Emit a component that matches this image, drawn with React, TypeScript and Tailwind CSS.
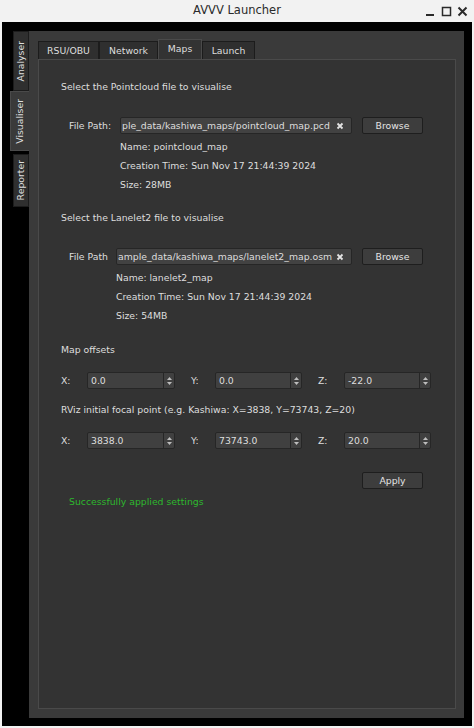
import React from "react";

function TitleBar() {
  return (
    <div className="relative h-[22px] flex items-center justify-center bg-[#f2f2f2] text-[#2a2a2a] text-[11.5px]">
      <span>AVVV Launcher</span>
      <div className="absolute right-[6px] top-0 h-[22px] flex items-center gap-[5px]">
        <svg width="11" height="11" viewBox="0 0 11 11">
          <rect x="1" y="8" width="8" height="2" fill="#2a2a2a" />
        </svg>
        <svg width="11" height="11" viewBox="0 0 11 11">
          <rect x="1.5" y="1.5" width="8" height="8" fill="none" stroke="#2a2a2a" strokeWidth="1.5" />
        </svg>
        <svg width="11" height="11" viewBox="0 0 11 11">
          <path d="M1.5 1.5 L9.5 9.5 M9.5 1.5 L1.5 9.5" stroke="#2a2a2a" strokeWidth="2" />
        </svg>
      </div>
    </div>
  );
}

function SideTabs() {
  return (
    <div className="w-[27px] flex flex-col items-end">
      <div className="w-[16px] h-[60px] bg-[#2f2f2f] border border-[#1c1c1c] flex items-center justify-center">
        <span className="[writing-mode:vertical-rl] rotate-180 whitespace-nowrap">Analyser</span>
      </div>
      <div className="w-[19px] h-[60px] bg-[#3a3a3a] border-t border-l border-b border-[#4a4a4a] flex items-center justify-center">
        <span className="[writing-mode:vertical-rl] rotate-180 whitespace-nowrap">Visualiser</span>
      </div>
      <div className="mt-[3px] w-[16px] h-[53px] bg-[#2f2f2f] border border-[#1c1c1c] flex items-center justify-center">
        <span className="[writing-mode:vertical-rl] rotate-180 whitespace-nowrap">Reporter</span>
      </div>
    </div>
  );
}

function TopTabs() {
  return (
    <div className="h-[20px] flex items-end">
      <div className="w-[61px] h-[18px] bg-[#2f2f2f] border border-b-0 border-[#1c1c1c] flex items-center justify-center">RSU/OBU</div>
      <div className="w-[59px] h-[18px] bg-[#2f2f2f] border border-b-0 border-[#1c1c1c] flex items-center justify-center">Network</div>
      <div className="w-[44px] h-[20px] bg-[#333333] border border-b-0 border-[#4a4a4a] flex items-center justify-center pb-[2px]">Maps</div>
      <div className="w-[53px] h-[18px] bg-[#2f2f2f] border border-b-0 border-[#1c1c1c] flex items-center justify-center">Launch</div>
    </div>
  );
}

function ClearIcon() {
  return (
    <svg width="8" height="8" viewBox="0 0 8 8">
      <path d="M1.5 1.5 L6.5 6.5 M6.5 1.5 L1.5 6.5" stroke="#e4e4e4" strokeWidth="1.8" />
    </svg>
  );
}

function Button({ label, className }: { label: string; className?: string }) {
  return (
    <div
      className={
        "w-[61px] h-[17px] bg-[#3d3d3d] border border-[#1e1e1e] rounded-[2px] flex items-center justify-center text-[#e4e4e4] " +
        (className ?? "")
      }
    >
      {label}
    </div>
  );
}

function FileRow({ label, labelW, fieldW, text }: { label: string; labelW: string; fieldW: string; text: string }) {
  return (
    <div className="flex items-center h-[17px] pl-[30px]">
      <div className={labelW + " whitespace-nowrap"}>{label}</div>
      <div className={fieldW + " h-[17px] bg-[#424242] border border-[#262626] rounded-[2px] flex items-center pl-[1px] pr-[7px] overflow-hidden"}>
        <span className="flex-1 whitespace-nowrap overflow-hidden">{text}</span>
        <ClearIcon />
      </div>
      <Button label="Browse" className="ml-[10px]" />
    </div>
  );
}

function Info({ pl, children }: { pl: string; children: React.ReactNode }) {
  return <div className={pl + " h-[19px] flex items-center whitespace-nowrap"}>{children}</div>;
}

function SpinBox({ value, w }: { value: string; w: string }) {
  return (
    <div className={w + " h-[17px] bg-[#404040] border border-[#262626] rounded-[2px] flex"}>
      <div className="flex-1 flex items-center pl-[3px]">{value}</div>
      <div className="w-[11px] border-l border-[#262626] flex flex-col items-center justify-center gap-[2px]">
        <svg width="5" height="3" viewBox="0 0 5 3">
          <path d="M0 3 L2.5 0 L5 3 Z" fill="#bdbdbd" />
        </svg>
        <svg width="5" height="3" viewBox="0 0 5 3">
          <path d="M0 0 L2.5 3 L5 0 Z" fill="#bdbdbd" />
        </svg>
      </div>
    </div>
  );
}

function SpinRow({ x, y, z }: { x: string; y: string; z: string }) {
  return (
    <div className="flex items-center h-[17px] pl-[22px]">
      <div className="w-[26px]">X:</div>
      <SpinBox value={x} w="w-[88px]" />
      <div className="ml-[16px] w-[24px]">Y:</div>
      <SpinBox value={y} w="w-[87px]" />
      <div className="ml-[16px] w-[26px]">Z:</div>
      <SpinBox value={z} w="w-[87px]" />
    </div>
  );
}

function Heading({ children, className }: { children: React.ReactNode; className?: string }) {
  return <div className={"h-[18px] pl-[22px] flex items-center whitespace-nowrap " + (className ?? "")}>{children}</div>;
}

export default function App() {
  return (
    <div className="w-[474px] h-[728px] bg-[#f2f2f2] flex flex-col font-['DejaVu_Sans',sans-serif] text-[9.3px] text-[#dedede] overflow-hidden">
      <TitleBar />
      <div className="flex-1 mx-[2px] mb-[2px] bg-black flex pt-[9px] pr-[8px] pb-[8px]">
        <SideTabs />
        <div className="flex-1 bg-[#3a3a3a] pt-[8px] pl-[9px] pr-[8px] pb-[9px] flex flex-col">
          <TopTabs />
          <div className="flex-1 bg-[#333333] border border-[#4a4a4a] flex flex-col pt-[18px]">
            <Heading>Select the Pointcloud file to visualise</Heading>
            <div className="mt-[21px]">
              <FileRow label="File Path:" labelW="w-[51px]" fieldW="w-[232px]" text="ple_data/kashiwa_maps/pointcloud_map.pcd" />
            </div>
            <div className="mt-[3px]">
              <Info pl="pl-[81px]">Name: pointcloud_map</Info>
              <Info pl="pl-[81px]">Creation Time: Sun Nov 17 21:44:39 2024</Info>
              <Info pl="pl-[81px]">Size: 28MB</Info>
            </div>
            <Heading className="mt-[15px]">Select the Lanelet2 file to visualise</Heading>
            <div className="mt-[21px]">
              <FileRow label="File Path" labelW="w-[47px]" fieldW="w-[236px]" text="ample_data/kashiwa_maps/lanelet2_map.osm" />
            </div>
            <div className="mt-[3px]">
              <Info pl="pl-[77px]">Name: lanelet2_map</Info>
              <Info pl="pl-[77px]">Creation Time: Sun Nov 17 21:44:39 2024</Info>
              <Info pl="pl-[77px]">Size: 54MB</Info>
            </div>
            <Heading className="mt-[16px]">Map offsets</Heading>
            <div className="mt-[13px]">
              <SpinRow x="0.0" y="0.0" z="-22.0" />
            </div>
            <Heading className="mt-[12px]">RViz initial focal point (e.g. Kashiwa: X=3838, Y=73743, Z=20)</Heading>
            <div className="mt-[13px]">
              <SpinRow x="3838.0" y="73743.0" z="20.0" />
            </div>
            <div className="mt-[23px] pl-[323px]">
              <Button label="Apply" />
            </div>
            <div className="mt-[4px] h-[18px] pl-[30px] flex items-center text-[#2db82d]">Successfully applied settings</div>
          </div>
        </div>
      </div>
    </div>
  );
}
